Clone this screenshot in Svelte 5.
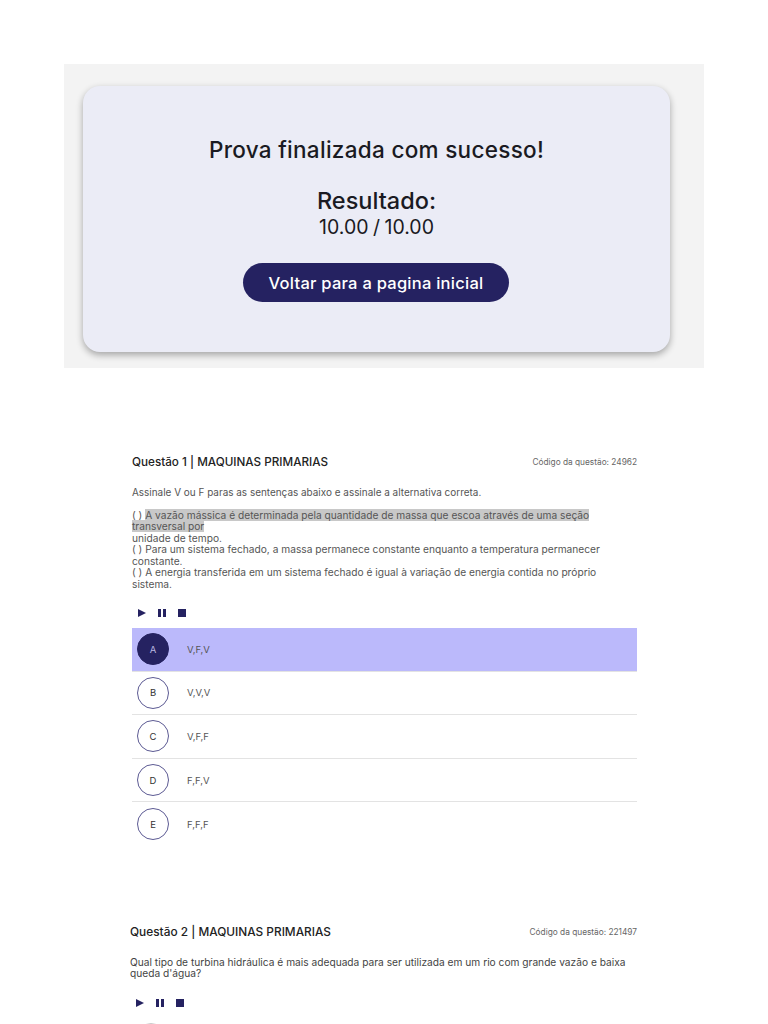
<script>
  const options = [
    { letter: 'A', text: 'V,F,V', selected: true },
    { letter: 'B', text: 'V,V,V' },
    { letter: 'C', text: 'V,F,F' },
    { letter: 'D', text: 'F,F,V' },
    { letter: 'E', text: 'F,F,F' }
  ];
</script>

{#snippet controls()}
  <div class="controls">
    <svg width="10" height="10" viewBox="0 0 10 10"><path d="M1 1 L9 5 L1 9 Z" /></svg>
    <svg width="10" height="10" viewBox="0 0 10 10"><path d="M1 1 H4 V9 H1 Z M6 1 H9 V9 H6 Z" /></svg>
    <svg width="10" height="10" viewBox="0 0 10 10"><path d="M1 1 H9 V9 H1 Z" /></svg>
  </div>
{/snippet}

<div class="page">
  <section class="panel">
    <div class="card">
      <h1>Prova finalizada com sucesso!</h1>
      <h2>Resultado:</h2>
      <p class="score">10.00 / 10.00</p>
      <button>Voltar para a pagina inicial</button>
    </div>
  </section>

  <section class="question q1">
    <header>
      <h3>Questão 1 | MAQUINAS PRIMARIAS</h3>
      <span class="code">Código da questão: 24962</span>
    </header>
    <div class="body">
      <p class="gap">Assinale V ou F paras as sentenças abaixo e assinale a alternativa correta.</p>
      <p>( ) <mark>A vazão mássica é determinada pela quantidade de massa que escoa através de uma seção<br />transversal por</mark><br />
      unidade de tempo.<br />
      ( ) Para um sistema fechado, a massa permanece constante enquanto a temperatura permanecer<br />constante.<br />
      ( ) A energia transferida em um sistema fechado é igual à variação de energia contida no próprio<br />sistema.</p>
    </div>
    {@render controls()}
    <ul>
      {#each options as o}
        <li class:selected={o.selected}>
          <span class="circle">{o.letter}</span>
          <span class="label">{o.text}</span>
        </li>
      {/each}
    </ul>
  </section>

  <section class="question q2">
    <header>
      <h3>Questão 2 | MAQUINAS PRIMARIAS</h3>
      <span class="code">Código da questão: 221497</span>
    </header>
    <div class="body">
      <p>Qual tipo de turbina hidráulica é mais adequada para ser utilizada em um rio com grande vazão e baixa<br />queda d'água?</p>
    </div>
    {@render controls()}
    <ul>
      <li><span class="circle faint"></span></li>
    </ul>
  </section>
</div>

<style>
  :global(body) {
    margin: 0;
    background: #fff;
  }
  .page {
    height: 1024px;
    overflow: hidden;
    padding-top: 64px;
    box-sizing: border-box;
    font-family: "Inter", "Open Sans", sans-serif;
    color: #333;
  }
  .panel {
    width: 640px;
    height: 304px;
    margin-left: 64px;
    padding: 22px 34px 16px 19px;
    box-sizing: border-box;
    background: #f3f3f3;
  }
  .card {
    height: 266px;
    background: #ebecf6;
    border-radius: 17px;
    box-shadow: 0 3px 7px rgba(0, 0, 0, 0.32);
    display: flex;
    flex-direction: column;
    align-items: center;
    color: #1a1a22;
  }
  h1 {
    margin: 50px 0 0;
    font-size: 22.5px;
    line-height: 28px;
    font-weight: 500;
    letter-spacing: 0.3px;
  }
  h2 {
    margin: 23px 0 0;
    font-size: 23.5px;
    line-height: 28px;
    font-weight: 500;
  }
  .score {
    margin: 0;
    font-size: 19.5px;
    line-height: 24px;
    word-spacing: -1px;
  }
  button {
    margin: 24px 1px 0 0;
    width: 266px;
    height: 39px;
    border: 0;
    padding: 0;
    border-radius: 20px;
    background: #252261;
    color: #fff;
    font: 500 16.5px "Inter", sans-serif;
    letter-spacing: 0.25px;
  }
  .question {
    margin-left: 132px;
    width: 505px;
  }
  .q1 { margin-top: 86px; }
  .q2 { margin-top: 78px; margin-left: 130px; width: 507px; }
  header {
    display: flex;
    justify-content: space-between;
    align-items: center;
    height: 16px;
  }
  h3 {
    margin: 0;
    font-size: 11.7px;
    font-weight: 500;
    color: #222;
  }
  .q2 h3 { font-size: 11.85px; }
  .code {
    font-size: 8.3px;
    color: #666;
  }
  .body {
    margin-top: 17px;
    font-size: 10.2px;
    line-height: 11.5px;
    color: #555;
  }
  .q2 .body { color: #444; }
  .body p { margin: 0; }
  .gap {
    margin-bottom: 11px !important;
    font-size: 9.95px;
  }
  mark {
    background: #c8c8c8;
    color: #555;
  }
  .controls {
    display: flex;
    gap: 10px;
    margin: 16px 0 0 5px;
    height: 14px;
    align-items: center;
  }
  .controls svg { fill: #252261; }
  ul {
    list-style: none;
    margin: 8px 0 0;
    padding: 0;
  }
  .q2 ul { margin-top: 7px; }
  li {
    height: 43.6px;
    box-sizing: border-box;
    display: flex;
    align-items: center;
    padding-left: 5px;
    border-bottom: 1px solid #e3e3e3;
    font-size: 9.5px;
    color: #555;
  }
  li:last-child { border-bottom: 0; }
  li.selected {
    background: #bbb9fb;
    border-bottom-color: #e3e3e3;
  }
  .circle {
    width: 32px;
    height: 32px;
    box-sizing: border-box;
    border: 1px solid #5c5a93;
    border-radius: 50%;
    display: flex;
    align-items: center;
    justify-content: center;
    margin-right: 18px;
    flex: none;
    color: #333;
  }
  .faint { border-color: #c9c9c9; }
  .selected .circle {
    background: #252261;
    border-color: #252261;
    color: #b9b8e0;
  }
</style>
